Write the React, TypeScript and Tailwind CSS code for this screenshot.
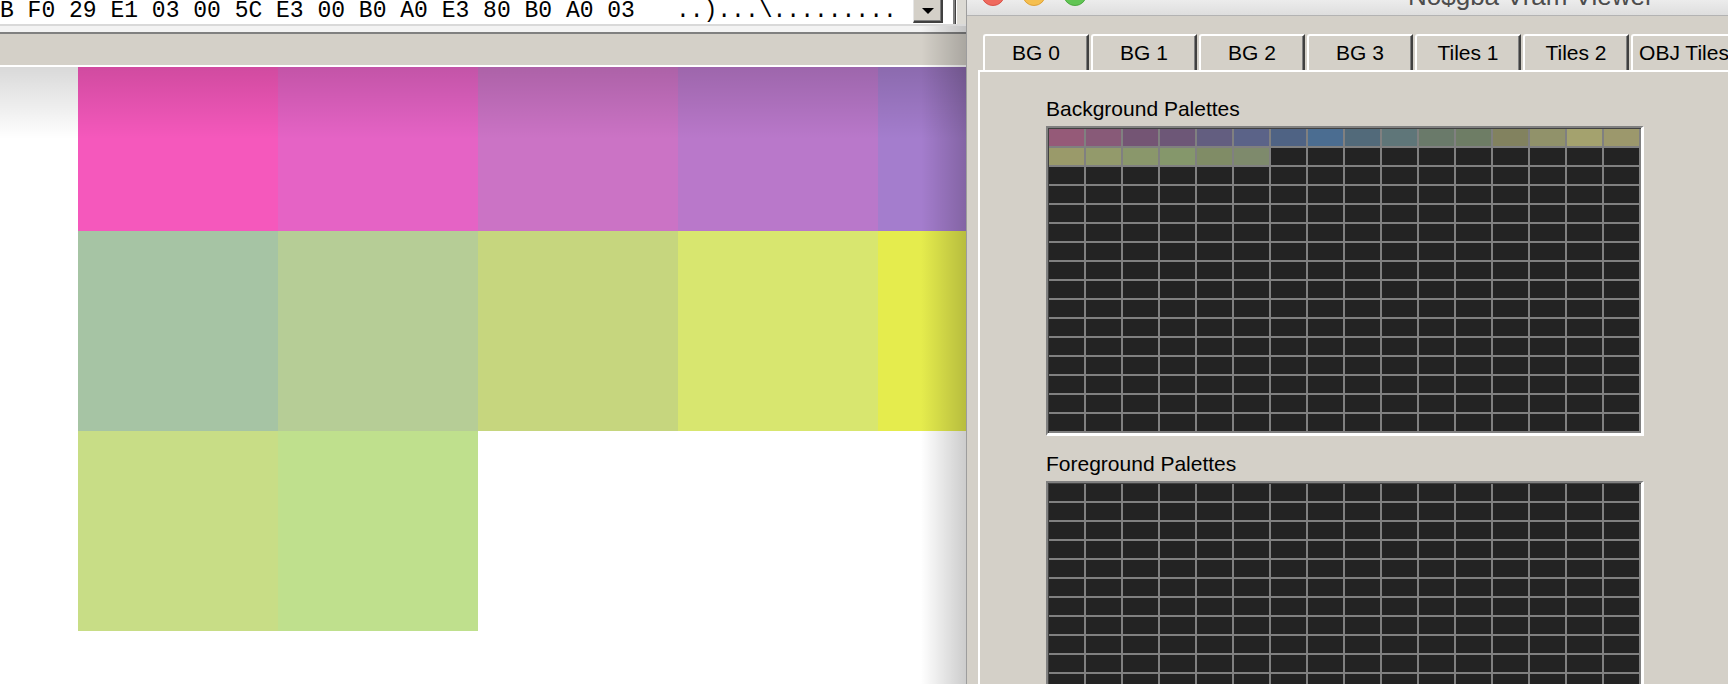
import React from 'react'

// colours currently loaded in the emulator's BG palette RAM (first 22 entries)
const bgPalette = [
  '#955a78', '#885a78', '#745574', '#6d5777', '#635e80', '#5b6388', '#4f6384', '#4b6d91',
  '#526a7a', '#5f7679', '#6a7a6a', '#6e7d65', '#82825f', '#91926a', '#a4a26e', '#9c986c',
  '#9a9a6a', '#939a6b', '#8a976b', '#85976b', '#808c66', '#7e8a6c',
]

const swatches = [
  '#f558bc', '#e563c5', '#cb73c5', '#b978ca', '#a47dcd',
  '#a6c4a4', '#b6cd96', '#c6d67e', '#d8e66f', '#e5ec4d',
  '#c8dd86', '#bfe08d',
]

const tabs = ['BG 0', 'BG 1', 'BG 2', 'BG 3', 'Tiles 1', 'Tiles 2', 'OBJ Tiles']

function PaletteGrid({ colors }: { colors: string[] }) {
  return (
    <div className="w-[598px] border-t-2 border-l-2 border-r-[3px] border-b-[3px] border-t-[#808080] border-l-[#808080] border-r-white border-b-white">
      <div className="border-t border-l border-t-[#404040] border-l-[#404040]">
        <div className="grid grid-cols-[repeat(16,35px)] grid-rows-[repeat(16,17px)] gap-[2px] bg-[#808080] pr-[2px] pb-[2px]">
          {Array.from({ length: 256 }, (_, i) => (
            <div key={i} className="bg-[#232323]" style={colors[i] ? { backgroundColor: colors[i] } : undefined} />
          ))}
        </div>
      </div>
    </div>
  )
}

function HexPane() {
  return (
    <div className="relative flex w-[966px] shrink-0 flex-col overflow-hidden bg-white">
      <div className="flex h-[24px] shrink-0">
        <div className="flex w-[913px] overflow-hidden whitespace-pre font-['Liberation_Mono',monospace] text-[23px] leading-[23px] text-black">
          <span>B F0 29 E1 03 00 5C E3 00 B0 A0 E3 80 B0 A0 03</span>
          <span className="ml-[41px]">..)...\.........</span>
        </div>
        <div className="flex h-[23px] w-[30px] shrink-0 items-center justify-center border-l border-r-2 border-b-2 border-l-[#e6e6e6] border-r-[#404040] border-b-[#404040] bg-[#d4d0c8] shadow-[inset_-1px_-1px_0_#808080]">
          <div className="h-0 w-0 border-x-[6px] border-t-[6px] border-x-transparent border-t-black" />
        </div>
        <div className="w-[10px] shrink-0 bg-white" />
        <div className="w-[3px] shrink-0 border-r border-r-[#404040] bg-[#808080]" />
        <div className="flex-1 border-l border-l-white bg-[#dcdad4]" />
      </div>
      <div className="h-[2px] shrink-0 bg-[#d9d9d9]" />
      <div className="h-[6px] shrink-0 bg-[#f3f3f3]" />
      <div className="h-[2px] shrink-0 bg-[#808080]" />
      <div className="h-[31px] shrink-0 bg-[#d4d0c8]" />
      <div className="h-[2px] shrink-0 bg-white" />
      <div className="relative flex-1 overflow-hidden bg-white">
        <div className="-mt-[36px] ml-[78px] grid w-[1000px] grid-cols-[repeat(5,200px)] grid-rows-[repeat(3,200px)]">
          {swatches.map((c) => (
            <div key={c} style={{ backgroundColor: c }} />
          ))}
        </div>
        <div className="pointer-events-none absolute inset-x-0 top-0 h-[72px] bg-linear-to-b from-black/[0.15] to-transparent" />
      </div>
      {/* drop shadow cast by the viewer window */}
      <div className="pointer-events-none absolute top-[26px] right-0 bottom-0 w-[45px] bg-linear-to-r from-transparent to-black/[0.2]" />
    </div>
  )
}

function VramViewer() {
  return (
    <div className="flex min-w-0 flex-1 flex-col overflow-hidden border-l border-l-[#9d9d9d] bg-[#d4d0c8]">
      <div className="flex h-[16px] shrink-0 items-start overflow-hidden border-b border-b-[#b3b3b3] bg-linear-to-b from-[#ececec] to-[#dedede]">
        <div className="-mt-[18px] ml-[14px] flex shrink-0 gap-[17px]">
          <div className="h-[24px] w-[24px] rounded-full border border-[#d9534a] bg-[#ef6a5e]" />
          <div className="h-[24px] w-[24px] rounded-full border border-[#dea23a] bg-[#f5bf4f]" />
          <div className="h-[24px] w-[24px] rounded-full border border-[#4ea942] bg-[#61c554]" />
        </div>
        <div className="-mt-[17px] ml-[321px] shrink-0 whitespace-nowrap text-[26px] leading-[26px] text-[#4d4d4d]">
          No$gba Vram Viewer
        </div>
      </div>

      <div className="mt-[18px] flex shrink-0 pl-[16px]">
        {tabs.map((t) => (
          <div
            key={t}
            className="mr-[2px] flex h-[36px] w-[106px] shrink-0 items-center justify-center rounded-tl-[3px] border-t-2 border-l-2 border-r-2 border-t-white border-l-white border-r-[#404040] text-[21px] text-black shadow-[inset_-1px_0_0_#808080]"
          >
            {t}
          </div>
        ))}
      </div>

      <div className="ml-[11px] flex flex-1 flex-col border-t-2 border-l-2 border-white pt-[25px] pl-[66px]">
        <div className="text-[21px] leading-[24px] text-black">Background Palettes</div>
        <div className="mt-[5px]">
          <PaletteGrid colors={bgPalette} />
        </div>
        <div className="mt-[16px] text-[21px] leading-[24px] text-black">Foreground Palettes</div>
        <div className="mt-[5px]">
          <PaletteGrid colors={[]} />
        </div>
      </div>
    </div>
  )
}

export default function App() {
  return (
    <div className="flex h-[684px] w-[1728px] overflow-hidden bg-white font-['Liberation_Sans',Arial,sans-serif]">
      <HexPane />
      <VramViewer />
    </div>
  )
}
